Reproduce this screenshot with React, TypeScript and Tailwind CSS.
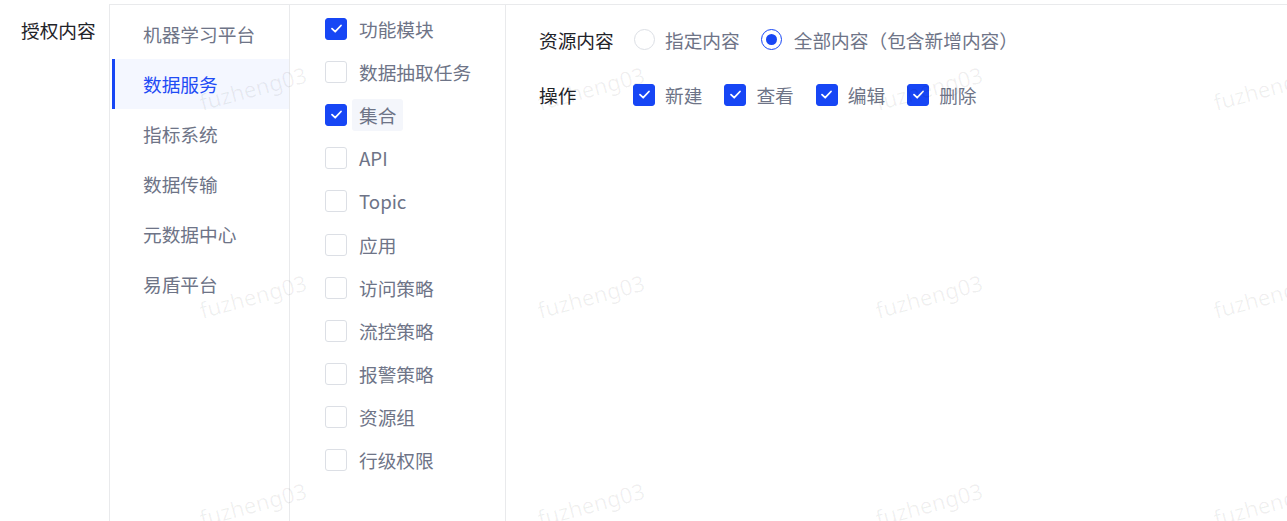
import { useState } from "react";

const menus = ["机器学习平台", "数据服务", "指标系统", "数据传输", "元数据中心", "易盾平台"];

const resources = [
  { name: "功能模块", checked: true },
  { name: "数据抽取任务", checked: false },
  { name: "集合", checked: true, hover: true },
  { name: "API", checked: false },
  { name: "Topic", checked: false },
  { name: "应用", checked: false },
  { name: "访问策略", checked: false },
  { name: "流控策略", checked: false },
  { name: "报警策略", checked: false },
  { name: "资源组", checked: false },
  { name: "行级权限", checked: false },
];

const actions = ["新建", "查看", "编辑", "删除"];

const font = "font-['Noto_Sans_CJK_SC','Noto_Sans',sans-serif]";

const Check = ({ checked }: { checked: boolean }) => (
  <span
    className={`flex h-[22px] w-[22px] shrink-0 items-center justify-center rounded-[3px] border ${
      checked ? "border-[#1746f5] bg-[#1746f5]" : "border-[#dcdfe5] bg-white"
    }`}
  >
    {checked && (
      <svg viewBox="0 0 16 16" className="h-[15px] w-[15px]" fill="none">
        <path d="M3.2 8.2 6.6 11.4 12.8 4.8" stroke="white" strokeWidth="1.9" strokeLinecap="round" strokeLinejoin="round" />
      </svg>
    )}
  </span>
);

const Radio = ({ checked }: { checked: boolean }) => (
  <span
    className={`flex h-[21px] w-[21px] shrink-0 items-center justify-center rounded-full border bg-white ${
      checked ? "border-[#1746f5]" : "border-[#dcdfe5]"
    }`}
  >
    {checked && <span className="h-[11px] w-[11px] rounded-full bg-[#1746f5]" />}
  </span>
);

const Watermarks = () => {
  const marks = [];
  for (let r = 0; r < 3; r++) {
    for (let c = 0; c < 4; c++) {
      marks.push({ x: 200 + c * 338, y: 86 + r * 208 });
    }
  }
  return (
    <div className="pointer-events-none absolute inset-0 overflow-hidden">
      {marks.map((m, i) => (
        <span
          key={i}
          className="absolute origin-left -rotate-[15deg] text-[22px] text-black/[0.06] font-['Noto_Sans',sans-serif]"
          style={{ left: m.x, top: m.y }}
        >
          fuzheng03
        </span>
      ))}
    </div>
  );
};

export default function App() {
  const [active, setActive] = useState(1);
  const [mode, setMode] = useState(1);

  return (
    <div className={`relative flex h-[521px] w-full overflow-hidden bg-white text-[18.7px] ${font}`}>
      <div className="w-[109px] shrink-0 pl-[21px] pt-[16px] leading-[27px] text-[#1f2329]">授权内容</div>

      <div className="mt-[4px] flex flex-1 border-l border-t border-[#e9eaec]">
        {/* 模块菜单 */}
        <div className="w-[180px] shrink-0 border-r border-[#e9eaec] pl-[2px] pt-[4px]">
          {menus.map((m, i) =>
            i === active ? (
              <div
                key={m}
                className="flex h-[50px] cursor-pointer items-center border-l-[3px] border-[#1746f5] bg-[#f4f7ff] pl-[28px] text-[#1f4cf5]"
              >
                {m}
              </div>
            ) : (
              <div
                key={m}
                onClick={() => setActive(i)}
                className="flex h-[50px] cursor-pointer items-center pl-[31px] text-[#6e7487]"
              >
                {m}
              </div>
            )
          )}
        </div>

        {/* 资源类型 */}
        <div className="w-[216px] shrink-0 border-r border-[#e9eaec] pl-[35px] pt-[2px]">
          {resources.map((r) => (
            <div key={r.name} className="flex h-[43.2px] items-center gap-[5px]">
              <Check checked={r.checked} />
              <span
                className={`rounded-[3px] px-[7px] leading-[32px] text-[#6e7487] ${r.hover ? "bg-[#f4f6fb]" : ""}`}
              >
                {r.name}
              </span>
            </div>
          ))}
        </div>

        {/* 权限配置 */}
        <div className="flex-1 pl-[33px] pt-[19px] text-[#1f2329]">
          <div className="flex h-[32px] items-center">
            <span className="w-[95px] shrink-0">资源内容</span>
            <label className="mr-[21px] flex cursor-pointer items-center gap-[10px]" onClick={() => setMode(0)}>
              <Radio checked={mode === 0} />
              <span className="text-[#6e7487]">指定内容</span>
            </label>
            <label className="flex cursor-pointer items-center gap-[12px]" onClick={() => setMode(1)}>
              <Radio checked={mode === 1} />
              <span className="text-[#6e7487]">全部内容（包含新增内容）</span>
            </label>
          </div>
          <div className="mt-[23px] flex h-[32px] items-center">
            <span className="w-[94px] shrink-0">操作</span>
            <div className="flex items-center gap-[22px]">
              {actions.map((a) => (
                <div key={a} className="flex items-center gap-[10px]">
                  <Check checked />
                  <span className="text-[#6e7487]">{a}</span>
                </div>
              ))}
            </div>
          </div>
        </div>
      </div>

      <Watermarks />
    </div>
  );
}
